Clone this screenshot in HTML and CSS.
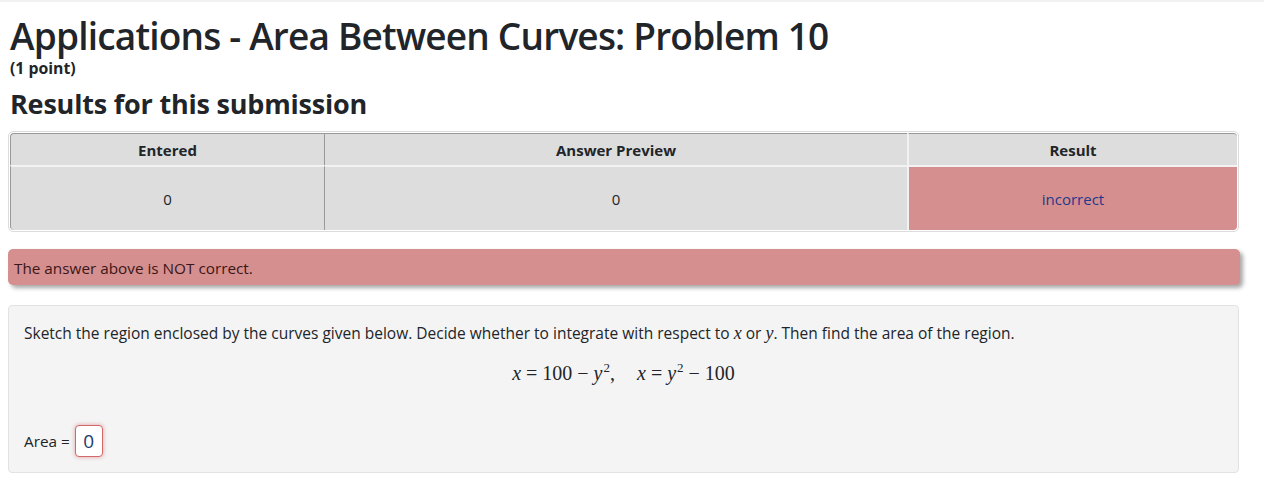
FILE: index.html
```html
<!DOCTYPE html>
<html lang="en">
<head>
<meta charset="utf-8">
<title>Applications - Area Between Curves: Problem 10</title>
<link rel="stylesheet" href="styles.css">
</head>
<body>
<div class="topbar"></div>
<main class="page">
  <h1 class="title">Applications - Area Between Curves: Problem 10</h1>
  <div class="points">(1 point)</div>
  <h2 class="results-title">Results for this submission</h2>
  <div class="table-wrap">
    <table class="results">
      <colgroup>
        <col class="c1"><col class="c2"><col class="c3">
      </colgroup>
      <thead>
        <tr><th>Entered</th><th>Answer Preview</th><th>Result</th></tr>
      </thead>
      <tbody>
        <tr><td>0</td><td>0</td><td class="bad"><span class="bad-text">incorrect</span></td></tr>
      </tbody>
    </table>
  </div>
  <div class="alert">The answer above is NOT correct.</div>
  <section class="problem">
    <p class="statement">Sketch the region enclosed by the curves given below. Decide whether to integrate with respect to <span class="mi">x</span> or <span class="mi">y</span>. Then find the area of the region.</p>
    <div class="display-math"><span class="mi">x</span><span class="mo">=</span><span class="mn">100</span><span class="mo">−</span><span class="mi">y</span><sup class="sup">2</sup><span class="mp">,</span><span class="quad"></span><span class="mi">x</span><span class="mo">=</span><span class="mi">y</span><sup class="sup">2</sup><span class="mo">−</span><span class="mn">100</span></div>
    <div class="answer-row">
      <span class="answer-label">Area =</span>
      <span class="answer-box">0</span>
    </div>
  </section>
</main>
</body>
</html>
```
FILE: styles.css
```css
html, body {
  margin: 0;
  padding: 0;
  background: #fff;
}
body {
  font-family: "Open Sans", "Noto Sans", sans-serif;
  color: #212529;
  font-size: 15px;
}
.topbar {
  height: 2px;
  background: #f1f1f1;
}
.page {
  padding: 0 25px 0 8px;
}
.title {
  font-size: 37px;
  font-weight: 600;
  margin: 0;
  padding: 15px 0 0 2px;
  line-height: 38px;
  letter-spacing: -0.8px;
}
.points {
  font-size: 15.8px;
  font-weight: 700;
  padding-left: 2px;
  line-height: 16px;
  margin-top: 5px;
}
.results-title {
  font-size: 27px;
  font-weight: 700;
  margin: 11px 0 0 0;
  padding-left: 2px;
  line-height: 34px;
  letter-spacing: -0.2px;
}
.table-wrap {
  margin-top: 10px;
  border: 1px solid #dcdcdc;
  border-radius: 5px;
  padding: 1px;
}
.results {
  width: 100%;
  border-collapse: separate;
  border-spacing: 0;
  table-layout: fixed;
}
.c1 { width: 314px; }
.c2 { width: 583px; }
.c3 { width: auto; }
.results th, .results td {
  background: #dddddd;
  text-align: center;
  border-top: 1px solid #999;
  border-left: 1px solid #999;
  padding: 0 4px;
  line-height: 20px;
}
.results th:last-child, .results td:last-child {
  border-left: 2px solid #f2f2f2;
}
.results td {
  border-top: 2px solid #f2f2f2;
}
.results th:first-child { border-top-left-radius: 4px; }
.results th:last-child { border-top-right-radius: 4px; border-top: 1px solid #999; }
.results td:first-child { border-bottom-left-radius: 4px; }
.results td:last-child { border-bottom-right-radius: 4px; }
.results th {
  height: 31px;
  font-weight: 700;
  font-size: 15px;
}
.results td {
  height: 63px;
  font-size: 15px;
}
.results td.bad {
  background: #d68f8f;
}
.bad-text {
  color: #1c3a8c;
}
.alert {
  margin-top: 17px;
  background: #d68f8f;
  border-radius: 5px;
  height: 36px;
  line-height: 38px;
  padding-left: 6px;
  font-size: 15.3px;
  color: #3a1616;
  box-shadow: 3px 3px 4px rgba(0, 0, 0, 0.35);
  margin-right: -1px;
}
.problem {
  margin-top: 20px;
  background: #f4f4f4;
  border: 1px solid #e2e2e2;
  border-radius: 4px;
  padding: 16px 15px 15px 15px;
}
.statement {
  margin: 0;
  font-size: 15.5px;
  line-height: 22px;
}
.mi {
  font-family: "Liberation Serif", "DejaVu Serif", serif;
  font-style: italic;
  font-size: 18px;
}
.mn {
  font-family: "Liberation Serif", "DejaVu Serif", serif;
  font-size: 20px;
}
.display-math {
  text-align: center;
  margin-top: 17px;
  font-family: "Liberation Serif", "DejaVu Serif", serif;
  font-size: 20px;
  line-height: 24px;
}
.display-math .mi { font-size: 20px; }
.mo {
  font-family: "Liberation Serif", "DejaVu Serif", serif;
  font-size: 20px;
  padding: 0 5px;
}
.mp { padding-right: 2px; }
.quad { display: inline-block; width: 20px; }
.sup {
  font-size: 13px;
  vertical-align: 8px;
  line-height: 0;
  margin-left: 1px;
}
.answer-row {
  margin-top: 40px;
  display: flex;
  align-items: center;
  gap: 5px;
}
.answer-label {
  font-size: 15.3px;
}
.answer-box {
  display: inline-flex;
  align-items: center;
  justify-content: center;
  width: 26px;
  height: 30px;
  background: #fff;
  border: 1px solid #d36868;
  border-radius: 4px;
  box-shadow: 0 0 4px rgba(200, 60, 60, 0.45);
  font-size: 19px;
  color: #1d3b6b;
}
```
